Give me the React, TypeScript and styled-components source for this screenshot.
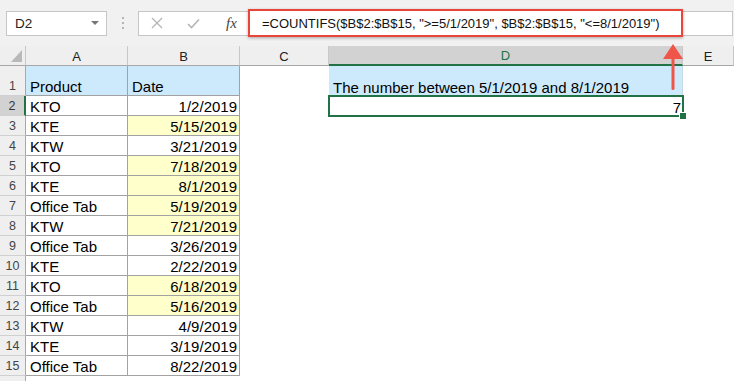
import styled, { createGlobalStyle } from "styled-components";

type Row = { product: string; date: string; marked: boolean };

const rows: Row[] = [
  { product: "KTO", date: "1/2/2019", marked: false },
  { product: "KTE", date: "5/15/2019", marked: true },
  { product: "KTW", date: "3/21/2019", marked: false },
  { product: "KTO", date: "7/18/2019", marked: true },
  { product: "KTE", date: "8/1/2019", marked: true },
  { product: "Office Tab", date: "5/19/2019", marked: true },
  { product: "KTW", date: "7/21/2019", marked: true },
  { product: "Office Tab", date: "3/26/2019", marked: false },
  { product: "KTE", date: "2/22/2019", marked: false },
  { product: "KTO", date: "6/18/2019", marked: true },
  { product: "Office Tab", date: "5/16/2019", marked: true },
  { product: "KTW", date: "4/9/2019", marked: false },
  { product: "KTE", date: "3/19/2019", marked: false },
  { product: "Office Tab", date: "8/22/2019", marked: false },
];

const columns = ["A", "B", "C", "D", "E"];

const GREEN = "#217346";

const GlobalStyle = createGlobalStyle`
  body {
    margin: 0;
    background: #fff;
    font-family: "Liberation Sans", Arial, sans-serif;
  }
`;

const Screen = styled.div`
  position: relative;
  width: 734px;
  height: 381px;
  overflow: hidden;
  background: #fff;
`;

const FormulaBar = styled.div`
  display: flex;
  align-items: center;
  height: 46px;
  padding: 0 1px 0 6px;
  box-sizing: border-box;
  background: #f1f1f1;
`;

const NameBox = styled.div`
  display: flex;
  align-items: center;
  justify-content: space-between;
  width: 101px;
  height: 25px;
  box-sizing: border-box;
  padding: 0 7px 0 8px;
  background: #fff;
  border: 1px solid #c6c6c6;
  font-size: 13.5px;
  color: #222;
`;

const Caret = styled.span`
  width: 0;
  height: 0;
  border-left: 4px solid transparent;
  border-right: 4px solid transparent;
  border-top: 4px solid #777;
`;

const Grip = styled.div`
  display: flex;
  flex-direction: column;
  gap: 3px;
  width: 2px;
  margin: 0 14px 0 15px;
  span {
    width: 2px;
    height: 2px;
    background: #b4b4b4;
  }
`;

const FormulaBox = styled.div`
  flex: 1;
  display: flex;
  align-items: center;
  height: 25px;
  box-sizing: border-box;
  background: #fff;
  border: 1px solid #c6c6c6;
`;

const Tools = styled.div`
  display: flex;
  align-items: center;
  width: 109px;
  padding-left: 12px;
  box-sizing: border-box;
  gap: 24px;
`;

const Fx = styled.span`
  font-family: "Liberation Serif", "Times New Roman", serif;
  font-style: italic;
  font-size: 15px;
  color: #444;
  margin-left: 2px;
`;

const Highlight = styled.div`
  display: flex;
  align-items: center;
  width: 435px;
  height: 28px;
  box-sizing: border-box;
  padding-left: 12px;
  border: 2px solid #e8463b;
  box-shadow: 0 1px 3px rgba(0, 0, 0, 0.3);
  background: #fff;
  font-size: 13px;
  color: #111;
  white-space: nowrap;
`;

const Sheet = styled.div`
  display: grid;
  grid-template-columns: 26px 102px 112px 89px 354px 1fr;
  grid-template-rows: 20px 30px repeat(14, 20px) 20px;
`;

const Corner = styled.div`
  position: relative;
  background: #efefef;
  border-right: 1px solid #c8c8c8;
  border-bottom: 1px solid #a8a8a8;
  box-sizing: border-box;
  &::after {
    content: "";
    position: absolute;
    right: 3px;
    bottom: 3px;
    border-left: 11px solid transparent;
    border-bottom: 12px solid #b9b9b9;
  }
`;

const ColHead = styled.div<{ $active?: boolean }>`
  display: flex;
  align-items: center;
  justify-content: center;
  box-sizing: border-box;
  padding-top: 1px;
  font-size: 13px;
  background: ${(p) => (p.$active ? "#d2d2d2" : "#efefef")};
  color: ${(p) => (p.$active ? GREEN : "#222")};
  border-right: 1px solid #c8c8c8;
  border-bottom: ${(p) => (p.$active ? `2px solid ${GREEN}` : "1px solid #a8a8a8")};
`;

const RowHead = styled.div<{ $active?: boolean }>`
  display: flex;
  align-items: flex-end;
  justify-content: center;
  box-sizing: border-box;
  padding-bottom: 2px;
  font-size: 12.5px;
  background: ${(p) => (p.$active ? "#d2d2d2" : "#efefef")};
  color: ${(p) => (p.$active ? "#333" : "#444")};
  border-bottom: 1px solid #d0d0d0;
  border-right: ${(p) => (p.$active ? `2px solid ${GREEN}` : "1px solid #a8a8a8")};
`;

const Cell = styled.div<{
  $fill?: string;
  $right?: boolean;
  $lined?: boolean;
  $current?: boolean;
}>`
  position: relative;
  display: flex;
  align-items: flex-end;
  justify-content: ${(p) => (p.$right ? "flex-end" : "flex-start")};
  box-sizing: border-box;
  padding: 0 2px 0 4px;
  font-size: 15px;
  color: #000;
  white-space: nowrap;
  background: ${(p) => p.$fill ?? "#fff"};
  ${(p) =>
    p.$lined &&
    `border-right: 1px solid #a2a2a2; border-bottom: 1px solid #a2a2a2;`}
  ${(p) =>
    p.$current &&
    `
    z-index: 1;
    box-shadow: 0 0 0 1px ${GREEN}, inset 0 0 0 1px ${GREEN};
    &::after {
      content: "";
      position: absolute;
      right: -4px;
      bottom: -4px;
      width: 6px;
      height: 6px;
      background: ${GREEN};
      border: 1px solid #fff;
    }
  `}
`;

const Arrow = () => (
  <svg
    width="24"
    height="50"
    viewBox="0 0 24 50"
    style={{ position: "absolute", left: 661, top: 43 }}
  >
    <polygon points="12,1 2,16 22,16" fill="#f0554a" />
    <rect x="10.5" y="14" width="3" height="33" rx="1.5" fill="#f0554a" />
  </svg>
);

const Cross = () => (
  <svg width="12" height="12" viewBox="0 0 12 12">
    <path d="M1 1L11 11M11 1L1 11" stroke="#b5b5b5" strokeWidth="1.3" />
  </svg>
);

const Check = () => (
  <svg width="13" height="11" viewBox="0 0 13 11">
    <path d="M1 6L4.5 9.5L12 1.5" stroke="#b5b5b5" strokeWidth="1.6" fill="none" />
  </svg>
);

const BLUE = "#cdeafd";
const YELLOW = "#ffffcc";

export default function App() {
  return (
    <Screen>
      <GlobalStyle />
      <FormulaBar>
        <NameBox>
          D2
          <Caret />
        </NameBox>
        <Grip>
          <span />
          <span />
          <span />
        </Grip>
        <FormulaBox>
          <Tools>
            <Cross />
            <Check />
            <Fx>fx</Fx>
          </Tools>
          <Highlight>
            =COUNTIFS($B$2:$B$15, "&gt;=5/1/2019", $B$2:$B$15, "&lt;=8/1/2019")
          </Highlight>
        </FormulaBox>
      </FormulaBar>

      <Sheet>
        <Corner />
        {columns.map((c) => (
          <ColHead key={c} $active={c === "D"}>
            {c}
          </ColHead>
        ))}

        <RowHead>1</RowHead>
        <Cell $fill={BLUE} $lined>
          Product
        </Cell>
        <Cell $fill={BLUE} $lined>
          Date
        </Cell>
        <Cell />
        <Cell $fill={BLUE} style={{ borderRight: "1px solid #c4d8e6" }}>
          The number between 5/1/2019 and 8/1/2019
        </Cell>
        <Cell />

        {rows.map((r, i) => (
          <Row key={i} index={i + 2} row={r} />
        ))}

        <RowHead />
        <Cell />
        <Cell />
        <Cell />
        <Cell />
        <Cell />
      </Sheet>
      <Arrow />
    </Screen>
  );
}

const Row = ({ index, row }: { index: number; row: Row }) => (
  <>
    <RowHead $active={index === 2}>{index}</RowHead>
    <Cell $lined>{row.product}</Cell>
    <Cell $lined $right $fill={row.marked ? YELLOW : undefined}>
      {row.date}
    </Cell>
    <Cell />
    {index === 2 ? (
      <Cell $right $current>
        7
      </Cell>
    ) : (
      <Cell />
    )}
    <Cell />
  </>
);
